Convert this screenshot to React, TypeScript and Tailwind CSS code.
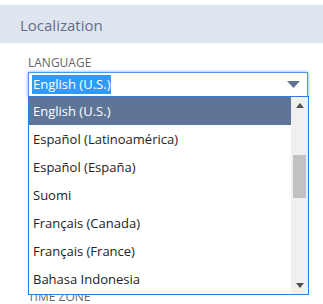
import React from "react";

const options = [
  "English (U.S.)",
  "Español (Latinoamérica)",
  "Español (España)",
  "Suomi",
  "Français (Canada)",
  "Français (France)",
  "Bahasa Indonesia",
];

export default function App() {
  return (
    <div className="w-[323px] h-[304px] overflow-hidden bg-white pt-[5px]" style={{ fontFamily: '"Open Sans", sans-serif' }}>
      <div className="h-[38px] bg-[#dfe5ee] flex items-center pl-[20px] pt-[3px]">
        <span className="text-[15px] text-[#5e6e8c]">Localization</span>
      </div>
      <div className="pl-[28px] pr-[15px] pt-[12px]">
        <div className="text-[12px] leading-[16px] text-[#666666]">LANGUAGE</div>
        <div className="relative z-10 mt-[1px]">
          <div className="h-[25px] border border-[#4d94e8] shadow-[0_0_3px_#6aa8f0] flex items-center pl-[3px] pr-[7px]">
            <span className="bg-[#3399ff] text-white text-[13px] leading-[19px] px-[1px]">English (U.S.)</span>
            <div className="flex-1" />
            <svg width="13" height="7" viewBox="0 0 13 7">
              <polygon points="0,0 13,0 6.5,7" fill="#5f7396" />
            </svg>
          </div>
          <div className="absolute left-0 top-[24px] w-[281px] h-[199px] border border-[#2f7de1] bg-white flex">
            <div className="flex-1 flex flex-col">
              {options.map((o, i) => (
                <div
                  key={o}
                  className={
                    i === 0
                      ? "h-[28px] flex items-center pl-[4px] pt-[2px] text-[13px] bg-[#5f7598] text-white"
                      : "h-[28px] flex items-center pl-[4px] pt-[2px] text-[13px] text-[#222222]"
                  }
                >
                  {o}
                </div>
              ))}
            </div>
            <div className="w-[17px] bg-[#f0f0f0] flex flex-col items-center">
              <div className="h-[17px] flex items-center justify-center">
                <svg width="8" height="5" viewBox="0 0 8 5">
                  <polygon points="0,5 8,5 4,0" fill="#505050" />
                </svg>
              </div>
              <div className="h-[41px]" />
              <div className="w-[13px] h-[43px] bg-[#c1c1c1]" />
              <div className="flex-1" />
              <div className="h-[17px] flex items-center justify-center">
                <svg width="8" height="5" viewBox="0 0 8 5">
                  <polygon points="0,0 8,0 4,5" fill="#505050" />
                </svg>
              </div>
            </div>
          </div>
        </div>
        <div className="relative z-0 text-[12px] leading-[16px] text-[#666666] mt-[192px]">TIME ZONE</div>
      </div>
    </div>
  );
}
